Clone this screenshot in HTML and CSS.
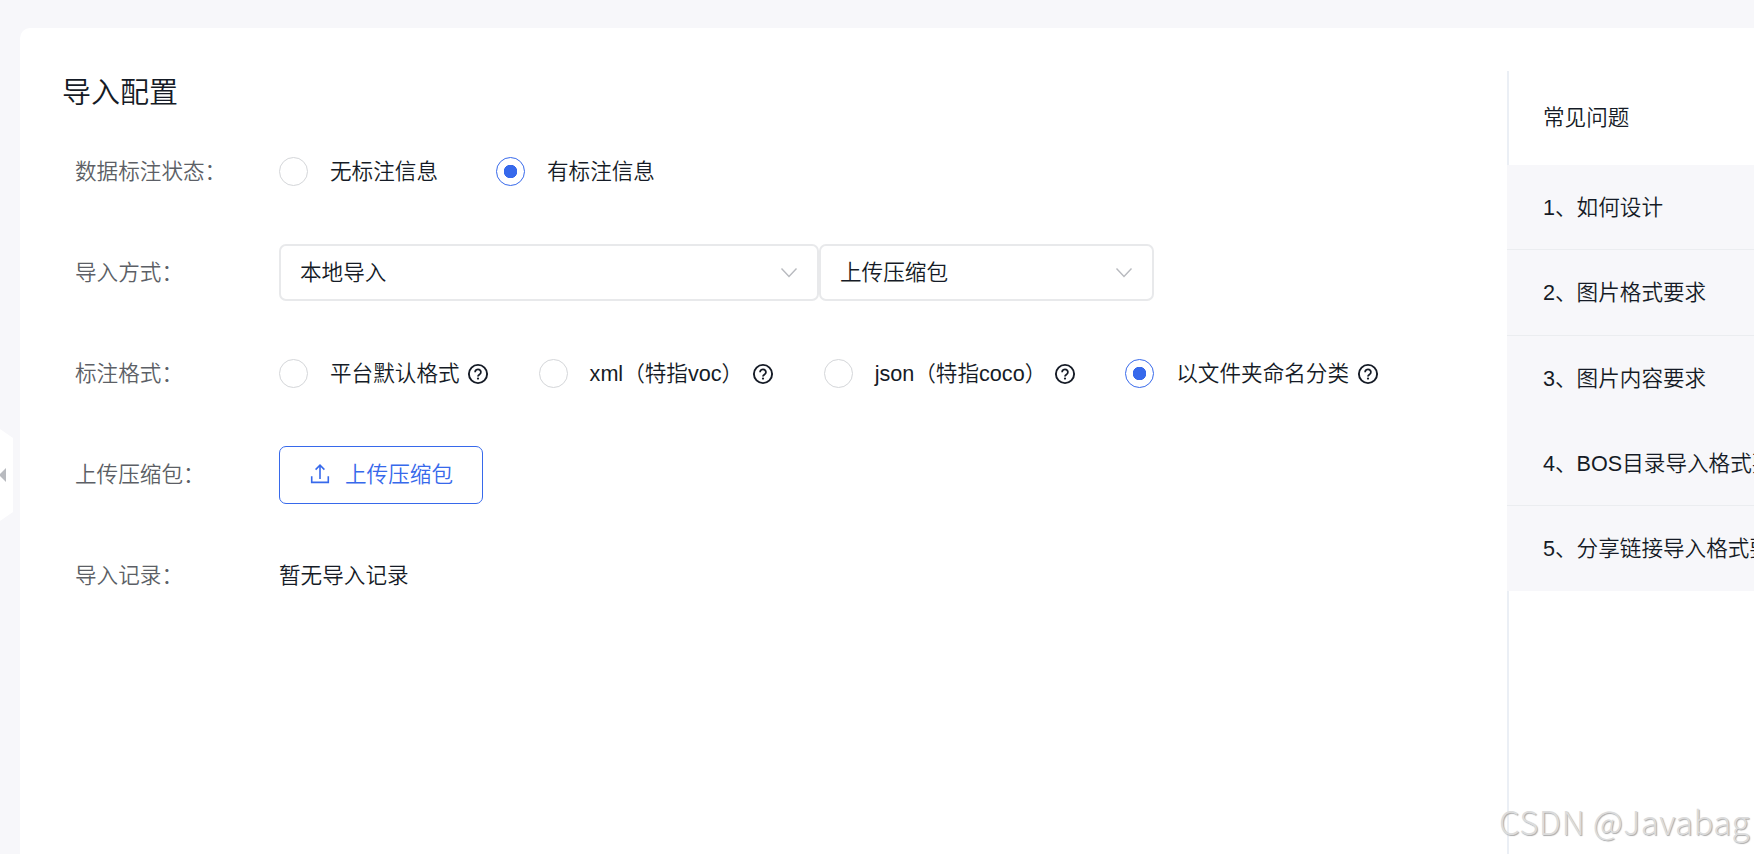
FILE: index.html
```html
<!DOCTYPE html>
<html lang="zh-CN">
<head>
    <meta charset="UTF-8">
    <meta name="viewport" content="width=device-width, initial-scale=1.0">
    <title>导入配置</title>
    <link rel="stylesheet" href="styles.css">
</head>
<body>
    <svg width="0" height="0" class="icon-defs">
        <symbol id="icon-help" viewBox="0 0 22 22">
            <circle cx="11" cy="11" r="9.1" fill="none" stroke="currentColor" stroke-width="1.9"/>
            <path d="M8.1 9.2a2.9 2.7 0 1 1 4.6 2.1c-1.1.7-1.7 1-1.7 2.1" fill="none" stroke="currentColor" stroke-width="1.8"/>
            <circle cx="11" cy="15.6" r="1.1" fill="currentColor"/>
        </symbol>
        <symbol id="icon-down" viewBox="0 0 18 12">
            <path d="M1.5 1.5L9 9.5l7.5-8" fill="none" stroke="currentColor" stroke-width="1.4"/>
        </symbol>
    </svg>

    <div class="collapse-handle"><span class="collapse-arrow"></span></div>

    <div class="card">
        <form class="config">
            <h1>导入配置</h1>

            <div class="form-row">
                <span class="label">数据标注状态：</span>
                <div class="options">
                    <label class="option"><input type="radio" name="status"><span>无标注信息</span></label>
                    <label class="option"><input type="radio" name="status" checked><span>有标注信息</span></label>
                </div>
            </div>

            <div class="form-row">
                <span class="label">导入方式：</span>
                <div class="select select-wide">
                    <span>本地导入</span>
                    <svg class="icon-down"><use href="#icon-down"/></svg>
                </div>
                <div class="select">
                    <span>上传压缩包</span>
                    <svg class="icon-down"><use href="#icon-down"/></svg>
                </div>
            </div>

            <div class="form-row">
                <span class="label">标注格式：</span>
                <div class="options options-format">
                    <label class="option"><input type="radio" name="format"><span>平台默认格式</span><svg class="icon-help"><use href="#icon-help"/></svg></label>
                    <label class="option option-xml"><input type="radio" name="format"><span>xml（特指voc）</span><svg class="icon-help"><use href="#icon-help"/></svg></label>
                    <label class="option"><input type="radio" name="format"><span>json（特指coco）</span><svg class="icon-help"><use href="#icon-help"/></svg></label>
                    <label class="option"><input type="radio" name="format" checked><span>以文件夹命名分类</span><svg class="icon-help"><use href="#icon-help"/></svg></label>
                </div>
            </div>

            <div class="form-row">
                <span class="label">上传压缩包：</span>
                <button type="button" class="upload">
                    <svg class="icon-upload" viewBox="0 0 20 20">
                        <path d="M1.7 12.2v6.2h16.6v-6.2M10 15V1.6M5.6 5.6L10 1.2l4.4 4.4" fill="none" stroke="currentColor" stroke-width="1.6"/>
                    </svg>
                    <span>上传压缩包</span>
                </button>
            </div>

            <div class="form-row">
                <span class="label">导入记录：</span>
                <span>暂无导入记录</span>
            </div>
        </form>

        <aside class="faq">
            <h2>常见问题</h2>
            <ul>
                <li>1、如何设计</li>
                <li>2、图片格式要求</li>
                <li class="no-line">3、图片内容要求</li>
                <li>4、BOS目录导入格式要</li>
                <li>5、分享链接导入格式要</li>
            </ul>
        </aside>
    </div>

    <div class="watermark">CSDN @Javabag</div>
</body>
</html>
```

FILE: styles.css
```css
* {
    box-sizing: border-box;
}

body {
    margin: 0;
    height: 854px;
    padding: 28px 0 0 20px;
    overflow: hidden;
    background-color: #f7f7fa;
    color: #151b26;
    font-family: "Liberation Sans", "Noto Sans CJK SC", sans-serif;
    font-size: 21.6px;
    font-weight: 350;
    line-height: 32px;
    white-space: nowrap;
}

.icon-defs {
    position: absolute;
}

.collapse-handle {
    position: absolute;
    left: 0;
    top: 429px;
    width: 13px;
    height: 92px;
    background-color: #fff;
    clip-path: polygon(0 0, 100% 9px, 100% 83px, 0 100%);
}

.collapse-arrow {
    position: absolute;
    left: -1px;
    top: 39px;
    border: solid transparent;
    border-width: 7px 7px 7px 0;
    border-right-color: #b8babf;
}

.card {
    display: flex;
    height: 826px;
    padding-top: 43px;
    background-color: #fff;
    border-top-left-radius: 10px;
}

.config {
    width: 1487px;
    flex: none;
    padding-left: 42px;
}

h1 {
    margin: 0 0 7px;
    padding-top: 1px;
    font-size: 29px;
    font-weight: 350;
    line-height: 42px;
}

.form-row {
    display: flex;
    align-items: center;
    height: 101px;
    padding-left: 13px;
}

.label {
    width: 204px;
    flex: none;
    color: #5c5f66;
}

.options,
.option {
    display: flex;
    align-items: center;
}

.options {
    gap: 58px;
}

.options-format {
    gap: 49.5px;
}

input[type="radio"] {
    appearance: none;
    width: 29px;
    height: 29px;
    margin: 0 22px 0 0;
    border: 1px solid #d4d6d9;
    border-radius: 50%;
}

input[type="radio"]:checked {
    border-color: #3769eb;
    background: radial-gradient(circle, #3769eb 6.5px, transparent 7px);
}

.icon-help {
    width: 22px;
    height: 22px;
    margin-left: 7.5px;
}

.option-xml .icon-help {
    margin-left: 9px;
}

.select {
    display: flex;
    align-items: center;
    justify-content: space-between;
    width: 335px;
    height: 57px;
    padding: 0 19px;
    border: 2px solid #e8e9eb;
    border-radius: 7px;
}

.select-wide {
    width: 540px;
}

.icon-down {
    width: 18px;
    height: 12px;
    color: #b8babf;
}

.upload {
    display: flex;
    align-items: center;
    gap: 15px;
    width: 204px;
    height: 58px;
    padding: 0 0 0 30px;
    border: 1px solid #3769eb;
    border-radius: 7px;
    background-color: #fff;
    color: #3769eb;
    font: inherit;
}

.icon-upload {
    width: 20px;
    height: 20px;
    margin-bottom: 2px;
}

.faq {
    flex: 1;
    min-width: 0;
    border-left: 2px solid #ebeff5;
}

.faq h2 {
    margin: 0;
    padding-left: 34px;
    font-size: inherit;
    font-weight: 350;
    line-height: 94px;
}

.faq ul {
    list-style: none;
    margin: 0 0 0 -2px;
    padding: 0;
}

.faq li {
    height: 85.3px;
    padding-left: 36px;
    overflow: hidden;
    border-bottom: 1px solid #ebedf0;
    background-color: #f7f7fa;
    line-height: 85px;
}

.faq li.no-line,
.faq li:last-child {
    border-bottom-color: #f7f7fa;
}

.watermark {
    position: absolute;
    left: 1499px;
    top: 801px;
    font-family: "Noto Sans CJK SC", sans-serif;
    font-size: 33px;
    font-weight: 300;
    line-height: 40px;
    letter-spacing: 0.4px;
    color: #dcdcdc;
    text-shadow: 1px 1px 1px #aaa;
}
```
